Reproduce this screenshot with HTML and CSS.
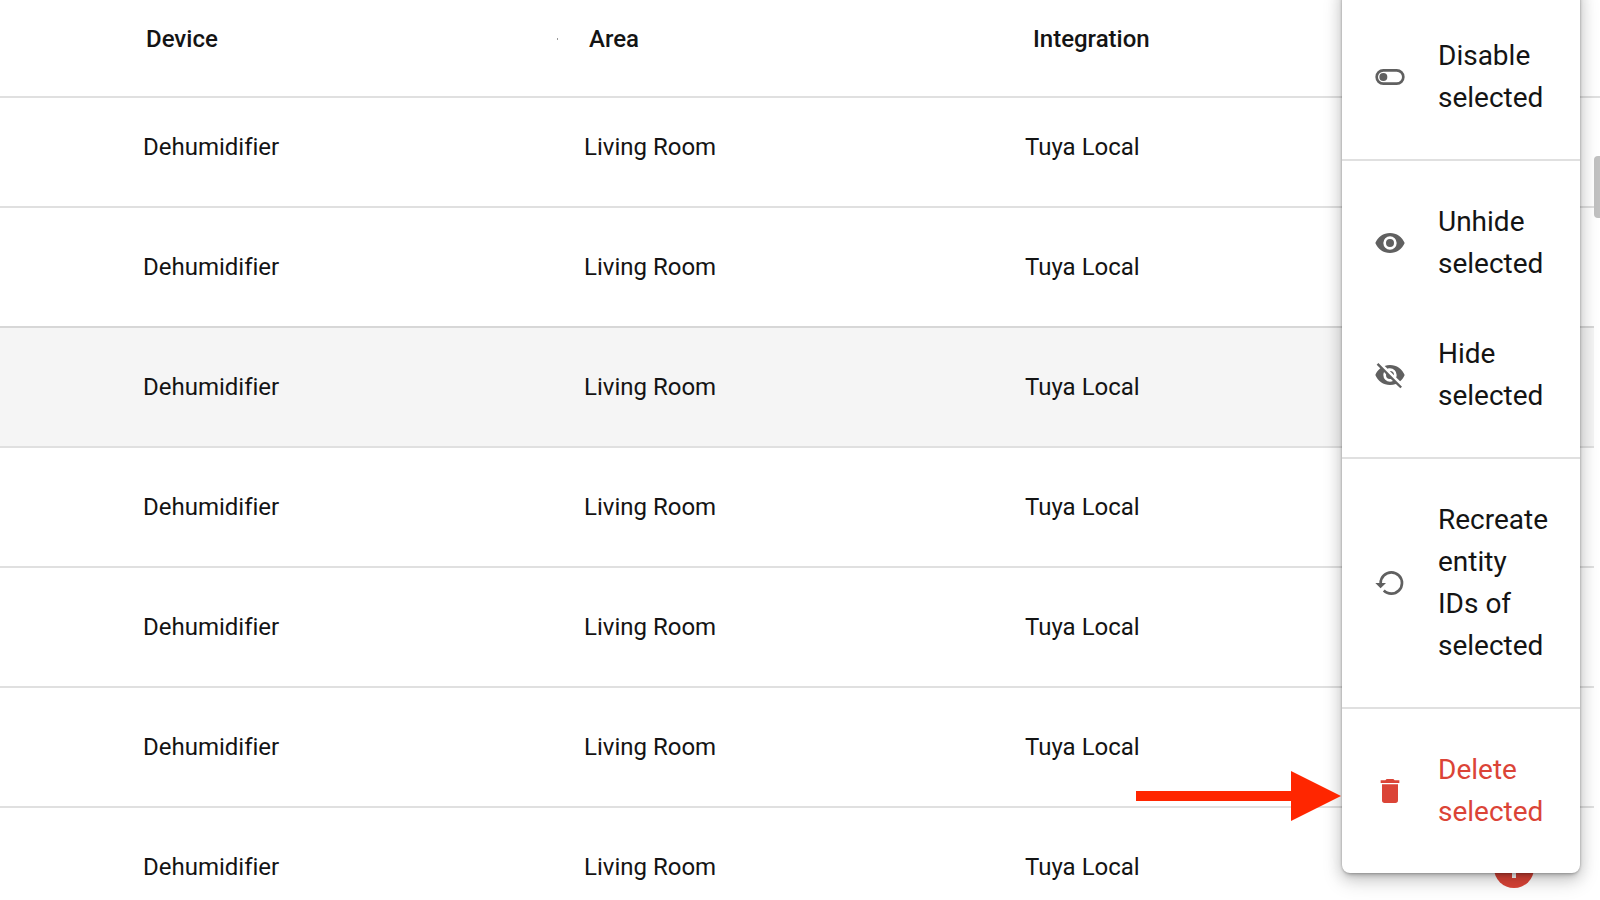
FILE: index.html
```html
<!DOCTYPE html>
<html lang="en">
<head>
<meta charset="utf-8">
<meta name="viewport" content="width=device-width, initial-scale=1">
<title>Entities</title>
<link rel="stylesheet" href="styles.css">
</head>
<body>
<main class="page">
  <table class="entities">
    <thead>
      <tr><th class="resizable" scope="col">Device</th><th scope="col">Area</th><th scope="col">Integration</th></tr>
    </thead>
    <tbody>
      <tr><td>Dehumidifier</td><td>Living Room</td><td>Tuya Local</td></tr>
      <tr><td>Dehumidifier</td><td>Living Room</td><td>Tuya Local</td></tr>
      <tr class="hovered"><td>Dehumidifier</td><td>Living Room</td><td>Tuya Local</td></tr>
      <tr><td>Dehumidifier</td><td>Living Room</td><td>Tuya Local</td></tr>
      <tr><td>Dehumidifier</td><td>Living Room</td><td>Tuya Local</td></tr>
      <tr><td>Dehumidifier</td><td>Living Room</td><td>Tuya Local</td></tr>
      <tr><td>Dehumidifier</td><td>Living Room</td><td>Tuya Local</td></tr>
    </tbody>
  </table>

  <div class="scroll-thumb"></div>

  <button class="fab" type="button" aria-label="Add">
    <svg viewBox="0 0 40 40" aria-hidden="true"><path d="M18 10h4v8h8v4h-8v8h-4v-8h-8v-4h8z"/></svg>
  </button>

  <div class="menu" role="menu">
    <button class="item" type="button" role="menuitem">
      <svg class="icon" viewBox="0 0 24 24" aria-hidden="true"><path d="M17,6H7A6,6 0 0,0 1,12A6,6 0 0,0 7,18H17A6,6 0 0,0 23,12A6,6 0 0,0 17,6M17,16H7A4,4 0 0,1 3,12A4,4 0 0,1 7,8H17A4,4 0 0,1 21,12A4,4 0 0,1 17,16M7,9A3,3 0 0,0 4,12A3,3 0 0,0 7,15A3,3 0 0,0 10,12A3,3 0 0,0 7,9Z"/></svg>
      <span>Disable selected</span>
    </button>
    <hr class="divider">
    <button class="item" type="button" role="menuitem">
      <svg class="icon" viewBox="0 0 24 24" aria-hidden="true"><path d="M12,9A3,3 0 0,0 9,12A3,3 0 0,0 12,15A3,3 0 0,0 15,12A3,3 0 0,0 12,9M12,17A5,5 0 0,1 7,12A5,5 0 0,1 12,7A5,5 0 0,1 17,12A5,5 0 0,1 12,17M12,4.5C7,4.5 2.73,7.61 1,12C2.73,16.39 7,19.5 12,19.5C17,19.5 21.27,16.39 23,12C21.27,7.61 17,4.5 12,4.5Z"/></svg>
      <span>Unhide selected</span>
    </button>
    <button class="item" type="button" role="menuitem">
      <svg class="icon" viewBox="0 0 24 24" aria-hidden="true"><path d="M11.83,9L15,12.16C15,12.11 15,12.05 15,12A3,3 0 0,0 12,9C11.94,9 11.89,9 11.83,9M7.53,9.8L9.08,11.35C9.03,11.56 9,11.77 9,12A3,3 0 0,0 12,15C12.22,15 12.44,14.97 12.65,14.92L14.2,16.47C13.53,16.8 12.79,17 12,17A5,5 0 0,1 7,12C7,11.21 7.2,10.47 7.53,9.8M2,4.27L4.28,6.55L4.73,7C3.08,8.3 1.78,10 1,12C2.73,16.39 7,19.5 12,19.5C13.55,19.5 15.03,19.2 16.38,18.66L16.81,19.08L19.73,22L21,20.73L3.27,3M12,7A5,5 0 0,1 17,12C17,12.64 16.87,13.26 16.64,13.82L19.57,16.75C21.07,15.5 22.27,13.86 23,12C21.27,7.61 17,4.5 12,4.5C10.6,4.5 9.26,4.75 8,5.2L10.17,7.35C10.74,7.13 11.35,7 12,7Z"/></svg>
      <span>Hide selected</span>
    </button>
    <hr class="divider">
    <button class="item" type="button" role="menuitem">
      <svg class="icon" viewBox="0 0 24 24" aria-hidden="true"><path d="M13,3A9,9 0 0,0 4,12H1L4.89,15.89L4.96,16.03L9,12H6A7,7 0 0,1 13,5A7,7 0 0,1 20,12A7,7 0 0,1 13,19C11.07,19 9.32,18.21 8.06,16.94L6.64,18.36C8.27,20 10.5,21 13,21A9,9 0 0,0 22,12A9,9 0 0,0 13,3Z"/></svg>
      <span>Recreate entity IDs of selected</span>
    </button>
    <hr class="divider">
    <button class="item danger" type="button" role="menuitem">
      <svg class="icon" viewBox="0 0 24 24" aria-hidden="true"><path d="M19,4H15.5L14.5,3H9.5L8.5,4H5V6H19V4M6,19A2,2 0 0,0 8,21H16A2,2 0 0,0 18,19V7H6V19Z"/></svg>
      <span>Delete selected</span>
    </button>
  </div>

  <svg class="arrow" viewBox="0 0 205 50" aria-hidden="true"><path d="M0 20H155V0L205 25L155 50V30H0Z"/></svg>
</main>
</body>
</html>
```

FILE: styles.css
```css
* {
  box-sizing: border-box;
}

body {
  margin: 0;
  background: #fff;
  color: #141414;
  font-family: Roboto, "Liberation Sans", sans-serif;
}

.page {
  position: relative;
  height: 100vh;
  overflow: hidden;
}

.entities,
.entities thead,
.entities tbody {
  display: block;
}

.entities {
  font-size: 24px;
  font-variant-ligatures: none;
  line-height: 32px;
}

.entities tr {
  display: grid;
}

.entities thead tr {
  grid-template-columns: 443fr 444fr 567fr;
  padding-left: 146px;
  border-bottom: 2px solid #e0e0e0;
}

.entities th {
  padding: 23px 0 41px;
  font-weight: 500;
  text-align: left;
}

.entities .resizable {
  display: flex;
  align-items: center;
  justify-content: space-between;
}

.resizable::after {
  content: "";
  width: 1px;
  height: 2px;
  margin-right: 31px;
  background: #999;
}

.entities tbody {
  padding-right: 6px;
}

.entities tbody tr {
  grid-template-columns: 441fr 441fr 569fr;
  padding-left: 143px;
  border-top: 2px solid #e0e0e0;
}

.entities td {
  padding: 43px 0;
}

/* The first row is partly scrolled under the header. */
.entities tbody tr:first-child {
  border-top: 0;
}

.entities tbody tr:first-child td {
  padding-top: 33px;
}

.entities tbody .hovered {
  background: #f5f5f5;
  border-top-color: #d7d7d7;
}

.scroll-thumb {
  position: absolute;
  top: 156px;
  right: 0;
  width: 6px;
  height: 62px;
  border-radius: 4px 0 0 4px;
  background: #c1c1c1;
}

.fab {
  position: absolute;
  right: 66px;
  bottom: 12px;
  width: 40px;
  height: 40px;
  padding: 0;
  border: 0;
  border-radius: 50%;
  background: #db4437;
}

.fab svg {
  display: block;
  fill: #fff;
}

.menu {
  position: absolute;
  top: -16px;
  right: 20px;
  width: 238px;
  padding: 27px 0 16px;
  border-radius: 8px;
  background: #fff;
  box-shadow:
    0 5px 5px -3px rgba(0, 0, 0, 0.2),
    0 8px 20px 1px rgba(0, 0, 0, 0.14),
    0 3px 14px 2px rgba(0, 0, 0, 0.12),
    0 0 3px rgba(0, 0, 0, 0.3);
}

.item {
  display: flex;
  align-items: center;
  gap: 32px;
  width: 100%;
  padding: 24px 30px 24px 32px;
  border: 0;
  background: none;
  color: inherit;
  font: inherit;
  font-size: 28px;
  line-height: 42px;
  text-align: left;
}

.icon {
  flex: none;
  width: 32px;
  height: 32px;
  fill: #606060;
}

.danger {
  color: #db4437;
}

.danger .icon {
  fill: currentColor;
}

.divider {
  height: 2px;
  margin: 16px 0;
  border: 0;
  background: #e0e0e0;
}

.arrow {
  position: absolute;
  top: 771px;
  right: 259px;
  width: 205px;
  height: 50px;
  fill: #ff2600;
}
```
